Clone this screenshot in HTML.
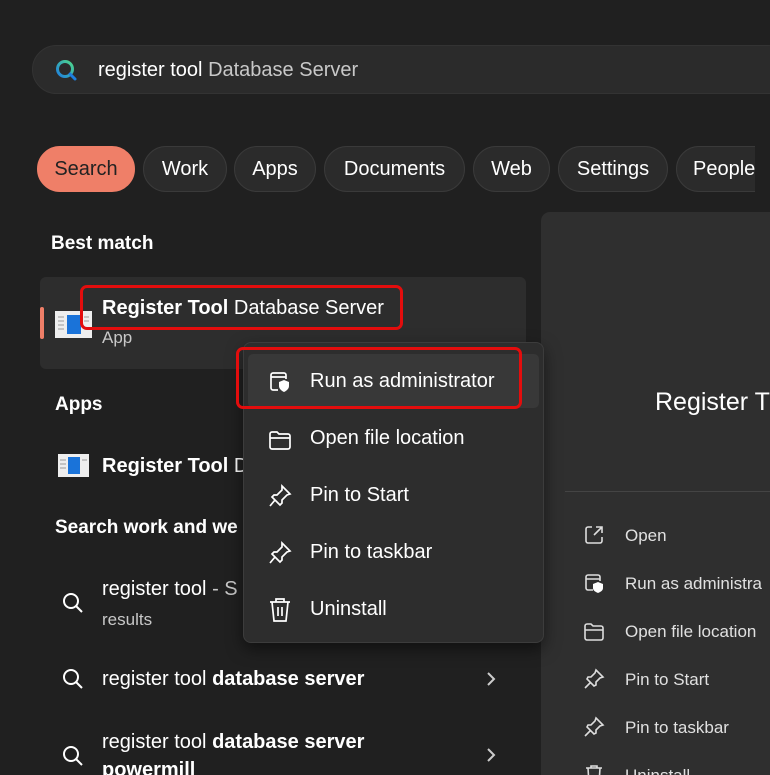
<!DOCTYPE html>
<html style="width:770px;height:775px;overflow:hidden"><head><meta charset="utf-8"><style>
*{margin:0;padding:0;box-sizing:border-box}
body{width:770px;height:775px;background:#202020;font-family:"Liberation Sans",sans-serif;color:#fff;position:relative;overflow:hidden}
.a{position:absolute;white-space:nowrap}
.pill{position:absolute;top:146px;height:46px;border-radius:23px;background:#2b2b2b;border:1px solid #3a3a3a;font-size:20px;line-height:44px;text-align:center;color:#fff}
.t20{font-size:20px}
.b{font-weight:bold}
.g{color:#c8c8c8}
svg{position:absolute;overflow:visible}
.mi{position:absolute;left:0;width:301px;height:57px;font-size:20px;line-height:57px}
.rp{position:absolute;left:85px;font-size:17px;color:#e0e0e0}
</style></head><body>
<div class="a" style="left:32px;top:45px;width:760px;height:49px;border-radius:25px;background:#2b2b2b;border:1px solid #333"></div>
<svg style="left:54px;top:58px" width="26" height="26" viewBox="0 0 26 26"><defs><linearGradient id="sg" x1="0" y1="1" x2="1" y2="0"><stop offset="0" stop-color="#1e7fe0"/><stop offset="1" stop-color="#4ed88a"/></linearGradient></defs><circle cx="11" cy="11" r="7.5" fill="none" stroke="url(#sg)" stroke-width="3"/><line x1="16" y1="16" x2="21" y2="21" stroke="#1e7fe0" stroke-width="3" stroke-linecap="round"/></svg>
<div class="a t20" style="left:98px;top:59px">register tool <span class="g">Database Server</span></div>
<div class="pill" style="left:37px;width:98px;background:#ef7f68;border-color:#ef7f68;color:#222">Search</div>
<div class="pill" style="left:143px;width:84px">Work</div>
<div class="pill" style="left:234px;width:82px">Apps</div>
<div class="pill" style="left:324px;width:141px">Documents</div>
<div class="pill" style="left:473px;width:77px">Web</div>
<div class="pill" style="left:558px;width:110px">Settings</div>
<div class="pill" style="left:676px;width:110px;text-align:left;padding-left:16px">People</div>
<div class="a" style="left:755px;top:140px;width:20px;height:60px;background:#202020"></div>
<div class="a b" style="left:51px;top:233px;font-size:19px">Best match</div>
<div class="a" style="left:40px;top:277px;width:486px;height:92px;background:#2d2d2d;border-radius:6px"></div>
<div class="a" style="left:40px;top:307px;width:4px;height:32px;background:#ef7f68;border-radius:2px"></div>
<svg style="left:55px;top:311px" width="37" height="27"><rect x="0" y="0" width="37" height="27" fill="#eee"/><rect x="12" y="4" width="14" height="19" fill="#1a73d9"/><g stroke="#999" stroke-width="1"><line x1="3" y1="6" x2="9" y2="6"/><line x1="3" y1="10" x2="9" y2="10"/><line x1="3" y1="14" x2="9" y2="14"/><line x1="3" y1="18" x2="9" y2="18"/><line x1="29" y1="6" x2="34" y2="6"/><line x1="29" y1="10" x2="34" y2="10"/></g></svg>
<div class="a t20" style="left:102px;top:297px"><span class="b">Register Tool</span> Database Server</div>
<div class="a g" style="left:102px;top:328px;font-size:17px">App</div>
<div class="a" style="left:80px;top:285px;width:323px;height:45px;border:3px solid #e30d0d;border-radius:7px"></div>
<div class="a b" style="left:55px;top:394px;font-size:19px">Apps</div>
<svg style="left:58px;top:454px" width="31" height="23"><rect width="31" height="23" fill="#eee"/><rect x="10" y="3" width="12" height="17" fill="#1a73d9"/><g stroke="#999"><line x1="2" y1="6" x2="8" y2="6"/><line x1="2" y1="10" x2="8" y2="10"/><line x1="2" y1="14" x2="8" y2="14"/><line x1="24" y1="6" x2="29" y2="6"/></g></svg>
<div class="a t20 b" style="left:102px;top:455px">Register Tool <span style="font-weight:normal">D</span></div>
<div class="a b" style="left:55px;top:517px;font-size:19px">Search work and we</div>
<svg style="left:62px;top:592px" width="22" height="22"><circle cx="9" cy="9" r="7" fill="none" stroke="#fff" stroke-width="2"/><line x1="14" y1="14" x2="20" y2="20" stroke="#fff" stroke-width="2"/></svg>
<div class="a t20" style="left:102px;top:578px">register tool <span class="g">- S</span></div>
<div class="a g" style="left:102px;top:610px;font-size:17px">results</div>
<svg style="left:62px;top:668px" width="22" height="22"><circle cx="9" cy="9" r="7" fill="none" stroke="#fff" stroke-width="2"/><line x1="14" y1="14" x2="20" y2="20" stroke="#fff" stroke-width="2"/></svg>
<div class="a t20" style="left:102px;top:668px">register tool <span class="b">database server</span></div>
<svg style="left:486px;top:671px" width="10" height="16"><path d="M2 2l6 6-6 6" fill="none" stroke="#ccc" stroke-width="2"/></svg>
<svg style="left:62px;top:745px" width="22" height="22"><circle cx="9" cy="9" r="7" fill="none" stroke="#fff" stroke-width="2"/><line x1="14" y1="14" x2="20" y2="20" stroke="#fff" stroke-width="2"/></svg>
<div class="a t20" style="left:102px;top:731px">register tool <span class="b">database server</span></div>
<div class="a t20 b" style="left:102px;top:759px">powermill</div>
<svg style="left:486px;top:747px" width="10" height="16"><path d="M2 2l6 6-6 6" fill="none" stroke="#ccc" stroke-width="2"/></svg>
<div class="a" style="left:541px;top:212px;width:260px;height:600px;background:#2f2f2f;border-radius:9px"></div>
<div class="a" style="left:655px;top:388px;font-size:25px;color:#fff">Register T</div>
<div class="a" style="left:565px;top:491px;width:210px;height:1px;background:#444"></div>
<div class="a" style="left:540px;top:0;width:230px;height:775px">
<svg style="left:43px;top:524px" width="22" height="22"><path d="M9 3H5a2 2 0 0 0-2 2v12a2 2 0 0 0 2 2h12a2 2 0 0 0 2-2v-4M13 3h6v6M19 3l-8 8" fill="none" stroke="#ddd" stroke-width="1.6"/></svg>
<div class="rp" style="top:526px">Open</div>
<svg style="left:43px;top:572px" width="22" height="22"><path d="M10 18H5a2 2 0 0 1-2-2V5a2 2 0 0 1 2-2h10a2 2 0 0 1 2 2v4M3 7h14" fill="none" stroke="#ddd" stroke-width="1.6"/><path d="M15 10l5 2v4c0 3-3 4-5 5-2-1-5-2-5-5v-4z" fill="#fff"/></svg>
<div class="rp" style="top:574px">Run as administra</div>
<svg style="left:43px;top:621px" width="22" height="22"><path d="M2 5a2 2 0 0 1 2-2h4l2 2h8a2 2 0 0 1 2 2v10a2 2 0 0 1-2 2H4a2 2 0 0 1-2-2zM2 9h18" fill="none" stroke="#ddd" stroke-width="1.6"/></svg>
<div class="rp" style="top:622px">Open file location</div>
<svg style="left:43px;top:668px" width="22" height="22"><path d="M13 2l7 7-3 1-4 4 0 3-2 1-7-7 1-2h3l4-4zM7 15l-5 5" fill="none" stroke="#ddd" stroke-width="1.6"/></svg>
<div class="rp" style="top:670px">Pin to Start</div>
<svg style="left:43px;top:716px" width="22" height="22"><path d="M13 2l7 7-3 1-4 4 0 3-2 1-7-7 1-2h3l4-4zM7 15l-5 5" fill="none" stroke="#ddd" stroke-width="1.6"/></svg>
<div class="rp" style="top:718px">Pin to taskbar</div>
<svg style="left:43px;top:764px" width="22" height="22"><path d="M3 4h16M8 4V2h6v2M5 4l1 16h10l1-16" fill="none" stroke="#ddd" stroke-width="1.6"/></svg>
<div class="rp" style="top:766px">Uninstall</div>
</div>
<div class="a" style="left:243px;top:342px;width:301px;height:301px;background:#2d2d2d;border:1px solid #3c3c3c;border-radius:8px;box-shadow:0 6px 16px rgba(0,0,0,.5)">
<div class="mi" style="top:11px;left:4px;width:291px;height:54px;background:#383838;border-radius:5px"></div>
<svg style="left:24px;top:27px" width="24" height="24"><path d="M10 20H5a2 2 0 0 1-2-2V5a2 2 0 0 1 2-2h11a2 2 0 0 1 2 2v4M3 7h15" fill="none" stroke="#fff" stroke-width="1.7"/><path d="M16 10l5 2v4c0 3-3 5-5 6-2-1-5-3-5-6v-4z" fill="#fff"/></svg>
<div class="a t20" style="left:66px;top:27px">Run as administrator</div>
<svg style="left:24px;top:85px" width="24" height="24"><path d="M2 6a2 2 0 0 1 2-2h5l2 2h9a2 2 0 0 1 2 2v11a2 2 0 0 1-2 2H4a2 2 0 0 1-2-2zM2 10h20" fill="none" stroke="#fff" stroke-width="1.7"/></svg>
<div class="a t20" style="left:66px;top:84px">Open file location</div>
<svg style="left:24px;top:141px" width="24" height="24"><path d="M14 2l8 8-3 1-5 5 0 3-2 2-8-8 2-2h3l5-5zM7 16l-5 6" fill="none" stroke="#fff" stroke-width="1.7"/></svg>
<div class="a t20" style="left:66px;top:141px">Pin to Start</div>
<svg style="left:24px;top:198px" width="24" height="24"><path d="M14 2l8 8-3 1-5 5 0 3-2 2-8-8 2-2h3l5-5zM7 16l-5 6" fill="none" stroke="#fff" stroke-width="1.7"/></svg>
<div class="a t20" style="left:66px;top:198px">Pin to taskbar</div>
<svg style="left:25px;top:254px" width="22" height="26"><path d="M1 5h20M7 5V2h8v3M3 5l2 19h12l2-19M9 10v9M13 10v9" fill="none" stroke="#fff" stroke-width="1.7"/></svg>
<div class="a t20" style="left:66px;top:255px">Uninstall</div>
</div>
<div class="a" style="left:236px;top:347px;width:286px;height:62px;border:3px solid #e30d0d;border-radius:7px"></div>
</body></html>
